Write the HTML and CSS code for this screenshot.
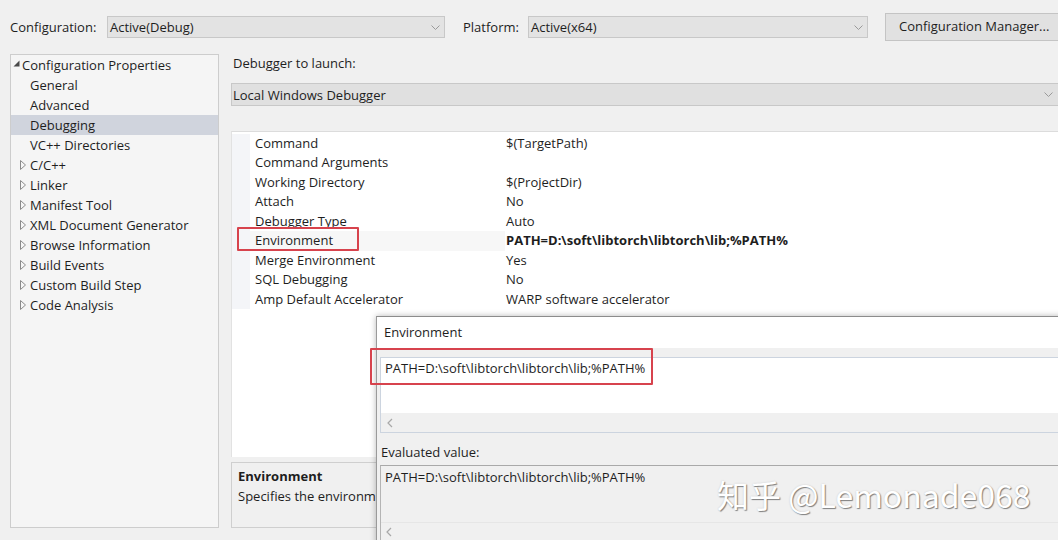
FILE: index.html
```html
<!DOCTYPE html>
<html>
<head>
<meta charset="utf-8">
<link rel="stylesheet" href="styles.css">
</head>
<body>
<div class="app">
  <div class="topbar">
    <span class="lbl lbl-config">Configuration:</span>
    <div class="combo combo-config"><span>Active(Debug)</span><svg class="chev" width="9" height="5" viewBox="0 0 9 5"><polyline points="0.5,0.5 4.5,4.5 8.5,0.5"/></svg></div>
    <span class="lbl lbl-platform">Platform:</span>
    <div class="combo combo-platform"><span>Active(x64)</span><svg class="chev" width="9" height="5" viewBox="0 0 9 5"><polyline points="0.5,0.5 4.5,4.5 8.5,0.5"/></svg></div>
    <div class="btn">Configuration Manager...</div>
  </div>

  <div class="main">
    <div class="tree">
      <div class="node root"><svg class="tri-open" width="7" height="7" viewBox="0 0 7 7"><polygon points="6.5,0.5 6.5,6.5 0.5,6.5"/></svg>Configuration Properties</div>
      <div class="node child">General</div>
      <div class="node child">Advanced</div>
      <div class="node child selected">Debugging</div>
      <div class="node child">VC++ Directories</div>
      <div class="node closed"><svg class="tri" width="7" height="10" viewBox="0 0 7 10"><polygon points="0.5,0.5 5.5,5 0.5,9.5"/></svg>C/C++</div>
      <div class="node closed"><svg class="tri" width="7" height="10" viewBox="0 0 7 10"><polygon points="0.5,0.5 5.5,5 0.5,9.5"/></svg>Linker</div>
      <div class="node closed"><svg class="tri" width="7" height="10" viewBox="0 0 7 10"><polygon points="0.5,0.5 5.5,5 0.5,9.5"/></svg>Manifest Tool</div>
      <div class="node closed"><svg class="tri" width="7" height="10" viewBox="0 0 7 10"><polygon points="0.5,0.5 5.5,5 0.5,9.5"/></svg>XML Document Generator</div>
      <div class="node closed"><svg class="tri" width="7" height="10" viewBox="0 0 7 10"><polygon points="0.5,0.5 5.5,5 0.5,9.5"/></svg>Browse Information</div>
      <div class="node closed"><svg class="tri" width="7" height="10" viewBox="0 0 7 10"><polygon points="0.5,0.5 5.5,5 0.5,9.5"/></svg>Build Events</div>
      <div class="node closed"><svg class="tri" width="7" height="10" viewBox="0 0 7 10"><polygon points="0.5,0.5 5.5,5 0.5,9.5"/></svg>Custom Build Step</div>
      <div class="node closed"><svg class="tri" width="7" height="10" viewBox="0 0 7 10"><polygon points="0.5,0.5 5.5,5 0.5,9.5"/></svg>Code Analysis</div>
    </div>

    <div class="right">
      <div class="launch-label">Debugger to launch:</div>
      <div class="combo combo-debugger"><span>Local Windows Debugger</span><svg class="chev" width="9" height="5" viewBox="0 0 9 5"><polyline points="0.5,0.5 4.5,4.5 8.5,0.5"/></svg></div>

      <div class="grid">
        <div class="row"><div class="name">Command</div><div class="val">$(TargetPath)</div></div>
        <div class="row"><div class="name">Command Arguments</div><div class="val"></div></div>
        <div class="row"><div class="name">Working Directory</div><div class="val">$(ProjectDir)</div></div>
        <div class="row"><div class="name">Attach</div><div class="val">No</div></div>
        <div class="row"><div class="name">Debugger Type</div><div class="val">Auto</div></div>
        <div class="row current"><div class="name">Environment</div><div class="val bold">PATH=D:\soft\libtorch\libtorch\lib;%PATH%</div></div>
        <div class="row"><div class="name">Merge Environment</div><div class="val">Yes</div></div>
        <div class="row"><div class="name">SQL Debugging</div><div class="val">No</div></div>
        <div class="row"><div class="name">Amp Default Accelerator</div><div class="val">WARP software accelerator</div></div>
        <div class="mark mark-row"></div>
      </div>

      <div class="desc">
        <div class="desc-title">Environment</div>
        <div class="desc-text">Specifies the environment for the program to be debugged.</div>
      </div>
    </div>
  </div>

  <div class="dialog">
    <div class="dlg-title">Environment</div>
    <div class="edit">
      <div class="edit-body">PATH=D:\soft\libtorch\libtorch\lib;%PATH%</div>
      <div class="hscroll"><svg class="larrow" width="6" height="10" viewBox="0 0 6 10"><polyline points="5,1 1,5 5,9"/></svg></div>
    </div>
    <div class="eval-label">Evaluated value:</div>
    <div class="evalbox">
      <div class="eval-body">PATH=D:\soft\libtorch\libtorch\lib;%PATH%</div>
      <div class="hscroll hscroll2"><svg class="larrow" width="6" height="10" viewBox="0 0 6 10"><polyline points="5,1 1,5 5,9"/></svg></div>
    </div>
  </div>
  <div class="mark mark-dlg"></div>

  <div class="watermark">知乎 @Lemonade068</div>
</div>
</body>
</html>
```

FILE: styles.css
```css
* { box-sizing: border-box; }
html, body { margin: 0; padding: 0; }
body {
  background: #f0f0f0;
  font-family: "Open Sans", "Noto Sans", sans-serif;
  font-size: 13px;
  color: #1e1e1e;
}
.app {
  position: relative;
  width: 1058px;
  height: 540px;
  overflow: hidden;
}

/* top bar */
.topbar {
  display: flex;
  align-items: center;
  height: 54px;
  padding-left: 10px;
}
.topbar > * { flex-shrink: 0; }
.lbl { white-space: nowrap; }
.lbl-config { width: 97px; }
.lbl-platform { width: 65px; margin-left: 18px; }
.combo {
  display: flex;
  align-items: center;
  justify-content: space-between;
  height: 22px;
  background: #e3e3e3;
  border: 1px solid #c8c8c8;
  padding: 0 4px 0 2px;
  white-space: nowrap;
  flex-shrink: 0;
}
.combo-config { width: 338px; }
.combo-platform { width: 340px; }
.chev { fill: none; stroke: #9a9a9a; stroke-width: 1; }
.btn {
  margin-left: 17px;
  width: 190px;
  height: 28px;
  background: #e1e1e1;
  border: 1px solid #c4c4c4;
  padding-left: 13px;
  line-height: 25px;
  white-space: nowrap;
}

/* main */
.main {
  display: flex;
  padding-left: 10px;
}
.tree {
  width: 209px;
  height: 474px;
  flex-shrink: 0;
  border: 1px solid #cdcdcd;
  background: #f5f5f5;
}
.node {
  height: 20px;
  line-height: 20px;
  white-space: nowrap;
  display: flex;
  align-items: center;
}
.node.root { padding-left: 2px; }
.node.child { padding-left: 19px; }
.node.closed { padding-left: 9px; }
.node.selected { background: #d0d4dd; }
.tri-open { fill: #4a4a4a; margin-right: 2px; margin-top: -3px; }
.tri { fill: none; stroke: #8a8a8a; stroke-width: 1; margin-right: 3px; }

.right {
  margin-left: 12px;
  width: 827px;
  flex-shrink: 0;
}
.launch-label {
  height: 29px;
  line-height: 18px;
  padding-left: 2px;
}
.combo-debugger {
  width: 828px;
  height: 23px;
  background: #e0e0e0;
  padding-left: 1px;
  padding-right: 5px;
}

.grid {
  position: relative;
  margin-top: 25px;
  height: 326px;
  border-top: 1px solid #dcdcdc;
  border-left: 1px solid #e2e2e2;
  background: #ffffff;
  padding-top: 1.75px;
}
.row {
  display: flex;
  height: 19.5px;
  line-height: 19.5px;
  white-space: nowrap;
  background: linear-gradient(to right, #f4f5f8 18px, #ffffff 18px);
}
.name {
  margin-left: 18px;
  width: 255px;
  padding-left: 5px;
}
.val { padding-left: 1px; }
.bold { font-weight: 700; }
.row.current .name { background: #f7f7f7; }

.mark {
  position: absolute;
  border: 2px solid #d7434d;
  border-radius: 1px;
}
.mark-row { left: 5px; top: 95px; width: 122px; height: 24px; }
.mark-dlg { left: 370px; top: 348px; width: 283px; height: 37px; }

.desc {
  margin-top: 5px;
  height: 66px;
  border: 1px solid #cfcfcf;
  background: #f0f0f0;
  padding: 3px 0 0 6px;
  line-height: 20px;
  white-space: nowrap;
  overflow: hidden;
}
.desc-title { font-weight: 700; }

/* environment dialog */
.dialog {
  position: absolute;
  left: 376px;
  top: 316px;
  width: 700px;
  height: 240px;
  background: #f0f0f0;
  border-top: 1px solid #8c8c8c;
  border-left: 1px solid #9a9a9a;
  box-shadow: 0 0 6px rgba(0, 0, 0, 0.28);
}
.dlg-title {
  height: 31px;
  line-height: 30px;
  background: #ffffff;
  padding-left: 7px;
}
.edit {
  margin: 9px 0 0 3px;
  height: 76px;
  border: 1px solid #ccd4df;
  border-right: none;
  background: #ffffff;
}
.edit-body {
  height: 55px;
  padding-left: 4px;
  line-height: 20px;
  white-space: nowrap;
}
.hscroll {
  height: 19px;
  background: #f0f0f0;
  display: flex;
  align-items: center;
  padding-left: 6px;
}
.larrow { fill: none; stroke: #a8a8a8; stroke-width: 1.2; }
.eval-label {
  height: 32px;
  padding: 9px 0 0 4px;
  line-height: 20px;
}
.evalbox {
  margin-left: 3px;
  height: 80px;
  border-top: 1px solid #a9a9a9;
  border-left: 1px solid #b4b4b4;
  background: #f0f0f0;
}
.eval-body {
  height: 56px;
  padding: 1px 0 0 4px;
  line-height: 20px;
  white-space: nowrap;
}
.hscroll2 { border-top: 1px solid #e6e6e6; padding-left: 5px; }

.watermark {
  position: absolute;
  left: 717px;
  top: 474px;
  font-family: "Noto Sans CJK SC", "Noto Sans", sans-serif;
  font-size: 32px;
  line-height: 40px;
  color: #ffffff;
  white-space: nowrap;
  text-shadow: 1px 1px 1px rgba(0, 0, 0, 0.45), 0 0 2px rgba(0, 0, 0, 0.15);
}
```
